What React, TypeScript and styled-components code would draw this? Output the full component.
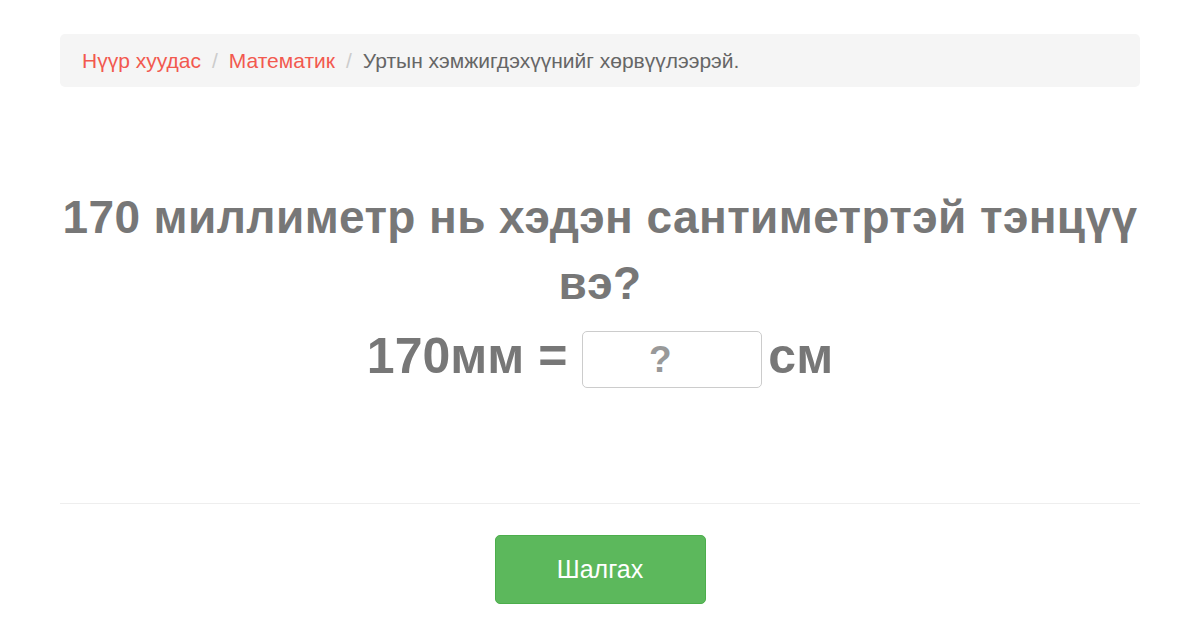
import styled, { createGlobalStyle } from "styled-components";

const GlobalStyle = createGlobalStyle`
	html, body {
		margin: 0;
		padding: 0;
		background: #fff;
	}
	body {
		font-family: "Liberation Sans", Arial, Helvetica, sans-serif;
		color: #333;
	}
	* {
		box-sizing: border-box;
	}
`;

const Container = styled.div`
	width: 1080px;
	margin: 0 auto;
	padding-top: 34px;
`;

const Breadcrumb = styled.ol`
	display: flex;
	align-items: center;
	list-style: none;
	margin: 0;
	height: 53px;
	padding: 0 22px;
	background: #f5f5f5;
	border-radius: 5px;
	font-size: 21px;

	li + li::before {
		content: "/";
		color: #ccc;
		padding: 0 11px;
	}
`;

const Crumb = styled.li<{ $active?: boolean }>`
	color: ${p => (p.$active ? "#666" : "#f2594f")};
`;

const Question = styled.div`
	margin-top: 97px;
	text-align: center;
	color: #777;
	font-weight: 700;
`;

const Title = styled.h2`
	margin: 0;
	font-size: 46px;
	line-height: 66px;
	letter-spacing: 0.4px;
	font-weight: 700;
`;

const Equation = styled.div`
	display: flex;
	justify-content: center;
	align-items: flex-start;
	margin-top: 15px;
	font-size: 50px;
	line-height: 50px;
`;

const Answer = styled.input`
	width: 180px;
	height: 57px;
	margin: 0 6px 0 15px;
	padding: 0 24px 0 0;
	border: 1px solid #ccc;
	border-radius: 5px;
	text-align: center;
	font-family: "Liberation Sans", Arial, sans-serif;
	font-size: 37px;
	font-weight: 700;
	color: #777;
	outline: none;

	&::placeholder {
		color: #999;
	}
`;

const Divider = styled.hr`
	margin: 115px 0 0;
	border: 0;
	border-top: 1px solid #eee;
`;

const Actions = styled.div`
	display: flex;
	justify-content: center;
	padding-top: 31px;
`;

const CheckButton = styled.button`
	width: 211px;
	height: 69px;
	border: 1px solid #4cae4c;
	border-radius: 5px;
	background: #5cb85c;
	color: #fff;
	font-family: "Liberation Sans", Arial, sans-serif;
	font-size: 25px;
	cursor: pointer;
`;

export default function App() {
	return (
		<>
			<GlobalStyle />
			<Container>
				<Breadcrumb>
					<Crumb>Нүүр хуудас</Crumb>
					<Crumb>Математик</Crumb>
					<Crumb $active>Уртын хэмжигдэхүүнийг хөрвүүлээрэй.</Crumb>
				</Breadcrumb>
				<Question>
					<Title>170 миллиметр нь хэдэн сантиметртэй тэнцүү вэ?</Title>
					<Equation>
						<span>170мм =</span>
						<Answer placeholder="?" />
						<span>см</span>
					</Equation>
				</Question>
				<Divider />
				<Actions>
					<CheckButton>Шалгах</CheckButton>
				</Actions>
			</Container>
		</>
	);
}
